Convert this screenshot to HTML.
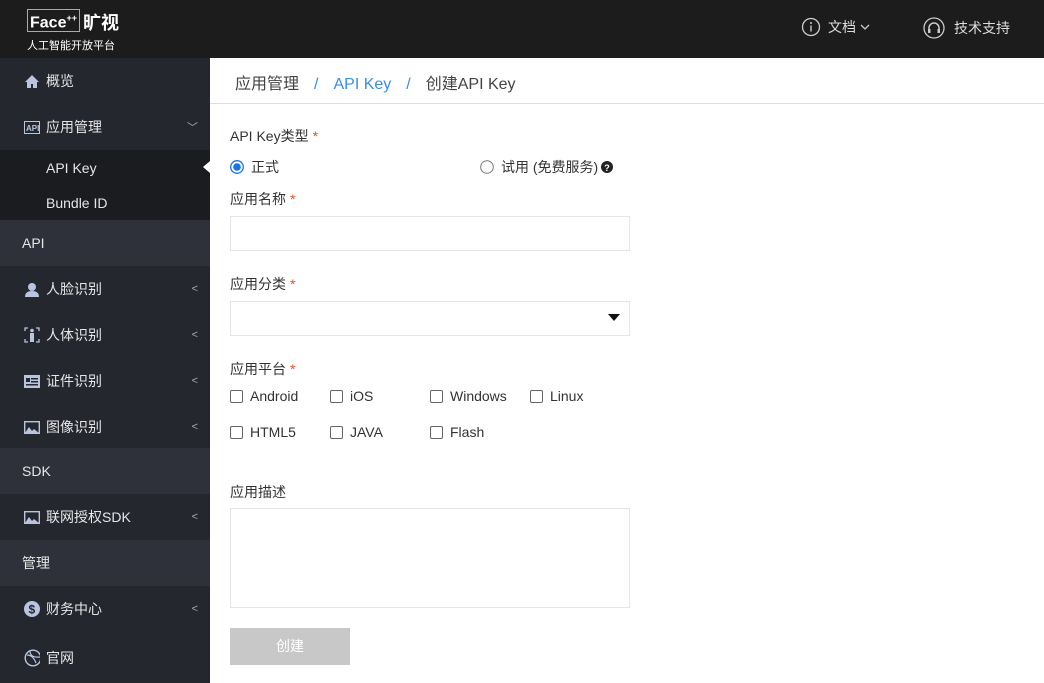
<!DOCTYPE html>
<html><head><meta charset="utf-8"><style>
*{margin:0;padding:0;box-sizing:border-box}
body{width:1044px;height:683px;overflow:hidden;font-family:"Liberation Sans","Noto Sans CJK SC",sans-serif;background:#fff;position:relative}
.hdr{position:absolute;left:0;top:0;width:1044px;height:58px;background:#1c1c1d}
.logo{position:absolute;left:27px;top:9px;color:#fff}
.logo .f{display:inline-block;border:1px solid #aaa;font-weight:bold;font-size:16px;line-height:17px;padding:0 2px}
.logo .f sup{font-size:9px}
.logo .z{font-size:18px;font-weight:bold;margin-left:3px;vertical-align:top}
.logo .s{font-size:11px;margin-top:2px;letter-spacing:0}
.hi{position:absolute;top:17px;color:#ddd;font-size:14px;display:flex;align-items:center}
.side{position:absolute;left:0;top:58px;width:210px;height:625px;background:#25272e}
.it{position:absolute;left:0;width:210px;color:#e6e6e6;font-size:14px;display:flex;align-items:center}
.it .ic{width:16px;height:16px;margin-left:24px;margin-right:6px;display:flex;align-items:center;justify-content:center}
.it .ar{position:absolute;right:12px;color:#aaa;font-size:11px}
.sec{background:#2e3139;padding-left:22px}
.sub{background:#1b1c20}
.main{position:absolute;left:210px;top:58px;right:0;bottom:0}
.bc{height:46px;border-bottom:1px solid #ddd;font-size:16px;color:#444;padding:12px 0 0 25px}
.bc .b{color:#3a8ee6}.bc .sl{color:#3a8ee6;margin:0 15px}
.lab{position:absolute;left:20px;font-size:14px;color:#333}
.lab i{color:#e4502c;font-style:normal;margin-left:4px}
.inp{position:absolute;left:20px;width:400px;height:35px;border:1px solid #e4e4e4;background:#fff}
.cb{position:absolute;font-size:14px;color:#333;display:flex;align-items:center}
.cb span{width:13px;height:13px;border:1px solid #666;border-radius:2px;margin-right:7px;background:#fff}
</style></head><body>
<div class="hdr">
<div class="logo"><span class="f">Face<sup>++</sup></span><span class="z">旷视</span><div class="s">人工智能开放平台</div></div>
<div class="hi" style="left:801px"><svg width="20" height="20"><circle cx="10" cy="10" r="8.5" fill="none" stroke="#ccc" stroke-width="1.3"/><circle cx="10" cy="6" r="1" fill="#ccc"/><rect x="9.3" y="8.5" width="1.4" height="6" fill="#ccc"/></svg><span style="margin-left:7px">文档</span><svg width="12" height="12" style="margin-left:3px"><path d="M2 4l4 4 4-4" fill="none" stroke="#ccc" stroke-width="1.3"/></svg></div>
<div class="hi" style="left:923px"><svg width="22" height="22"><circle cx="11" cy="11" r="10" fill="none" stroke="#ccc" stroke-width="1.3"/><path d="M6 15v-4a5 5 0 0 1 10 0v4" fill="none" stroke="#ccc" stroke-width="1.5"/><rect x="5" y="12" width="2.5" height="4" fill="#ccc"/><rect x="14.5" y="12" width="2.5" height="4" fill="#ccc"/></svg><span style="margin-left:9px">技术支持</span></div>
</div>
<div class="side">
<div class="it" style="top:0;height:46px"><span class="ic"><svg width="16" height="15"><path d="M8 1L1 8h2v6h4v-4h2v4h4V8h2z" fill="#b8c4e0"/></svg></span>概览</div>
<div class="it" style="top:46px;height:46px"><span class="ic"><svg width="16" height="13"><rect x=".5" y=".5" width="15" height="12" fill="none" stroke="#b8c4e0"/><text x="2" y="10" font-size="8" font-weight="bold" fill="#b8c4e0" font-family="Liberation Sans">API</text></svg></span>应用管理<span class="ar">﹀</span></div>
<div class="sub" style="position:absolute;top:92px;left:0;width:210px;height:70px"></div>
<div class="it" style="top:92px;height:35px;padding-left:46px">API Key</div>
<svg style="position:absolute;left:203px;top:103px" width="7" height="12"><path d="M7 0L0 6l7 6z" fill="#fff"/></svg>
<div class="it" style="top:127px;height:35px;padding-left:46px">Bundle ID</div>
<div class="it sec" style="top:162px;height:46px">API</div>
<div class="it" style="top:208px;height:46px"><span class="ic"><svg width="16" height="15"><circle cx="8" cy="5" r="4" fill="#b8c4e0"/><path d="M1 15q0-6 7-6t7 6z" fill="#b8c4e0"/></svg></span>人脸识别<span class="ar">&lt;</span></div>
<div class="it" style="top:254px;height:46px"><span class="ic"><svg width="16" height="16"><path d="M1 4V1h3M12 1h3v3M1 12v3h3M12 15h3v-3" fill="none" stroke="#b8c4e0" stroke-width="1.3"/><circle cx="8" cy="3.5" r="1.8" fill="#b8c4e0"/><rect x="6" y="6" width="4" height="9" fill="#b8c4e0"/></svg></span>人体识别<span class="ar">&lt;</span></div>
<div class="it" style="top:300px;height:46px"><span class="ic"><svg width="16" height="13"><rect width="16" height="13" fill="#b8c4e0"/><rect x="2" y="3" width="4" height="4" fill="#25272e"/><rect x="7" y="3" width="7" height="1.5" fill="#25272e"/><rect x="7" y="6" width="7" height="1.5" fill="#25272e"/><rect x="2" y="9" width="12" height="1.5" fill="#25272e"/></svg></span>证件识别<span class="ar">&lt;</span></div>
<div class="it" style="top:346px;height:46px"><span class="ic"><svg width="16" height="13"><rect x=".7" y=".7" width="14.6" height="11.6" fill="none" stroke="#b8c4e0" stroke-width="1.4"/><path d="M1 12l4-6 3 4 2-2 5 4z" fill="#b8c4e0"/></svg></span>图像识别<span class="ar">&lt;</span></div>
<div class="it sec" style="top:390px;height:46px">SDK</div>
<div class="it" style="top:436px;height:46px"><span class="ic"><svg width="16" height="13"><rect x=".7" y=".7" width="14.6" height="11.6" fill="none" stroke="#b8c4e0" stroke-width="1.4"/><path d="M1 12l4-6 3 4 2-2 5 4z" fill="#b8c4e0"/></svg></span>联网授权SDK<span class="ar">&lt;</span></div>
<div class="it sec" style="top:482px;height:46px">管理</div>
<div class="it" style="top:528px;height:46px"><span class="ic"><svg width="16" height="16"><circle cx="8" cy="8" r="8" fill="#b8c4e0"/><text x="4.5" y="12.5" font-size="12" font-weight="bold" fill="#25272e" font-family="Liberation Sans">$</text></svg></span>财务中心<span class="ar">&lt;</span></div>
<div class="it" style="top:574px;height:51px"><span class="ic"><svg width="18" height="18"><circle cx="9" cy="9" r="7.8" fill="none" stroke="#b8c4e0" stroke-width="1.4"/><path d="M3 6q6 0 9 8M6 2q0 7 10 6" fill="none" stroke="#b8c4e0" stroke-width="1.2"/></svg></span>官网</div>
</div>
<div class="main">
<div class="bc">应用管理<span class="sl">/</span><span class="b">API Key</span><span class="sl">/</span>创建API Key</div>
<div class="lab" style="top:68px">API Key类型<i>*</i></div>
<div class="cb" style="left:20px;top:99px"><svg width="14" height="14" style="margin-right:7px"><circle cx="7" cy="7" r="6.3" fill="#fff" stroke="#1a73e8" stroke-width="1.3"/><circle cx="7" cy="7" r="3.8" fill="#1a73e8"/></svg>正式</div>
<div class="cb" style="left:270px;top:99px"><svg width="14" height="14" style="margin-right:7px"><circle cx="7" cy="7" r="6.3" fill="#fff" stroke="#777" stroke-width="1"/></svg>试用 (免费服务)<svg width="12" height="12" style="margin-left:3px"><circle cx="6" cy="6" r="6" fill="#222"/><text x="3.2" y="10" font-size="9" font-weight="bold" fill="#fff" font-family="Liberation Sans">?</text></svg></div>
<div class="lab" style="top:131px">应用名称<i>*</i></div>
<div class="inp" style="top:158px"></div>
<div class="lab" style="top:216px">应用分类<i>*</i></div>
<div class="inp" style="top:243px"><svg style="position:absolute;right:9px;top:12px" width="12" height="8"><path d="M0 0h12L6 7z" fill="#111"/></svg></div>
<div class="lab" style="top:301px">应用平台<i>*</i></div>
<div class="cb" style="left:20px;top:330px"><span></span>Android</div>
<div class="cb" style="left:120px;top:330px"><span></span>iOS</div>
<div class="cb" style="left:220px;top:330px"><span></span>Windows</div>
<div class="cb" style="left:320px;top:330px"><span></span>Linux</div>
<div class="cb" style="left:20px;top:366px"><span></span>HTML5</div>
<div class="cb" style="left:120px;top:366px"><span></span>JAVA</div>
<div class="cb" style="left:220px;top:366px"><span></span>Flash</div>
<div class="lab" style="top:424px">应用描述</div>
<div class="inp" style="top:450px;height:100px"></div>
<div style="position:absolute;left:20px;top:570px;width:120px;height:37px;background:#c8c8c8;color:#fff;font-size:14px;text-align:center;line-height:37px">创建</div>
</div>
</body></html>
